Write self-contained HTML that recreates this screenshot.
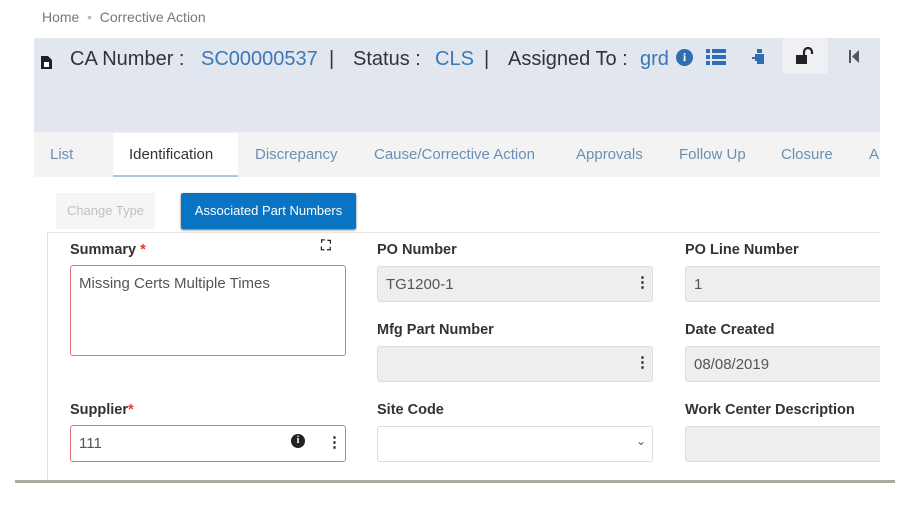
<!DOCTYPE html>
<html><head><style>
body{margin:0;width:915px;height:506px;background:#fff;font-family:"Liberation Sans",sans-serif;position:relative;overflow:hidden;color:#333}
.a{position:absolute}
.bc{left:42px;top:9px;font-size:14px;color:#777}
.hdr{left:34px;top:38px;width:846px;height:94px;background:#e2e6ee}
.ht{top:48px;font-size:20px;color:#333;white-space:nowrap}
.b{color:#3a78b8}
.tabs{left:34px;top:132px;width:846px;height:45px;background:#f3f3f3}
.tab{top:146px;font-size:15px;color:#6a8fb5}
.lbl{font-size:14.5px;font-weight:bold;color:#333}
.inp{border:1px solid #ddd;border-radius:3px;background:#eee;box-sizing:border-box;font-size:15px;color:#555;padding:9px 8px}
.red{border:1.5px solid #e57373;background:#fff}
.dots{font-weight:bold;font-size:15px;color:#222}
</style></head><body>
<div class="a bc">Home &nbsp;<span style="color:#bbb">•</span>&nbsp; Corrective Action</div>
<div class="a hdr"></div>
<svg class="a" style="left:40px;top:55px" width="13" height="15"><path d="M1 1h7l4 4v9H1z" fill="#222"/><rect x="4" y="7" width="5" height="5" fill="#fff"/></svg>
<div class="a ht" style="left:70px">CA Number :</div>
<div class="a ht b" style="left:201px">SC00000537</div>
<div class="a ht" style="left:329px">|</div>
<div class="a ht" style="left:353px">Status :</div>
<div class="a ht b" style="left:435px">CLS</div>
<div class="a ht" style="left:484px">|</div>
<div class="a ht" style="left:508px">Assigned To :</div>
<div class="a ht b" style="left:640px">grd</div>
<div class="a" style="left:676px;top:49px;width:17px;height:17px;border-radius:50%;background:#2f6db5;color:#fff;font-size:12px;font-weight:bold;text-align:center;line-height:17px;font-family:'Liberation Serif',serif">i</div>
<svg class="a" style="left:706px;top:48px" width="20" height="18" fill="#2f6db5"><rect x="0" y="1" width="4" height="4"/><rect x="6" y="1" width="14" height="4"/><rect x="0" y="7" width="4" height="4"/><rect x="6" y="7" width="14" height="4"/><rect x="0" y="13" width="4" height="4"/><rect x="6" y="13" width="14" height="4"/></svg>
<svg class="a" style="left:752px;top:49px" width="14" height="16" fill="#2f6db5"><rect x="5" y="0" width="5" height="4"/><path d="M3 5h9v10H5v-3H3z"/><rect x="0" y="8" width="3" height="2"/></svg>
<div class="a" style="left:782px;top:38px;width:46px;height:36px;background:#eef0f3;border-radius:3px"></div>
<svg class="a" style="left:795px;top:47px" width="20" height="18"><path d="M9 8V5a4 4 0 0 1 8 0v2" stroke="#222" stroke-width="2.2" fill="none"/><rect x="1" y="8" width="11" height="9" fill="#222"/></svg>
<svg class="a" style="left:848px;top:50px" width="12" height="14" fill="#555"><rect x="1" y="0" width="2" height="13"/><path d="M11 0L4 6.5 11 13z"/></svg>
<div class="a tabs"></div>
<div class="a" style="left:113px;top:133px;width:125px;height:44px;background:#fff;border-bottom:2px solid #a9c6e4;box-sizing:border-box"></div>
<div class="a tab" style="left:50px">List</div>
<div class="a tab" style="left:129px;color:#333">Identification</div>
<div class="a tab" style="left:255px">Discrepancy</div>
<div class="a tab" style="left:374px">Cause/Corrective Action</div>
<div class="a tab" style="left:576px">Approvals</div>
<div class="a tab" style="left:679px">Follow Up</div>
<div class="a tab" style="left:781px">Closure</div>
<div class="a tab" style="left:869px">A</div>
<div class="a" style="left:56px;top:193px;width:99px;height:36px;background:#f5f5f5;color:#c0c0c0;font-size:13px;text-align:center;line-height:36px">Change Type</div>
<div class="a" style="left:181px;top:193px;width:175px;height:36px;background:#0a74c4;color:#fff;font-size:13px;text-align:center;line-height:36px;border-radius:2px;box-shadow:0 1px 2px #666">Associated Part Numbers</div>
<div class="a" style="left:47px;top:232px;width:833px;height:1px;background:#ece9df"></div>
<div class="a" style="left:47px;top:232px;width:1px;height:248px;background:#e2e2e2"></div>
<div class="a" style="left:15px;top:480px;width:880px;height:3px;background:#a8ab9f"></div>
<div class="a lbl" style="left:70px;top:242px">Summary <span style="color:#e53935">*</span></div>
<div class="a" style="left:321px;top:237px;font-size:14px;font-weight:bold;color:#222">⛶</div>
<div class="a inp red" style="left:70px;top:265px;width:276px;height:91px">Missing Certs Multiple Times</div>
<div class="a lbl" style="left:377px;top:242px">PO Number</div>
<div class="a inp" style="left:377px;top:266px;width:276px;height:36px">TG1200-1</div><div class="a dots" style="left:635px;top:273px">⋮</div>
<div class="a lbl" style="left:685px;top:242px">PO Line Number</div>
<div class="a inp" style="left:685px;top:266px;width:200px;height:36px">1</div>
<div class="a lbl" style="left:377px;top:322px">Mfg Part Number</div>
<div class="a inp" style="left:377px;top:346px;width:276px;height:36px"></div><div class="a dots" style="left:635px;top:353px">⋮</div>
<div class="a lbl" style="left:685px;top:322px">Date Created</div>
<div class="a inp" style="left:685px;top:346px;width:200px;height:36px">08/08/2019</div>
<div class="a lbl" style="left:70px;top:402px">Supplier<span style="color:#e53935">*</span></div>
<div class="a inp red" style="left:70px;top:425px;width:276px;height:37px">111</div>
<div class="a" style="left:291px;top:434px;width:14px;height:14px;border-radius:50%;background:#222;color:#fff;font-size:10px;font-weight:bold;text-align:center;line-height:14px;font-family:'Liberation Serif',serif">i</div>
<div class="a dots" style="left:327px;top:433px">⋮</div>
<div class="a lbl" style="left:377px;top:402px">Site Code</div>
<div class="a inp" style="left:377px;top:426px;width:276px;height:36px;background:#fff"></div>
<div class="a" style="left:636px;top:434px;font-size:12px;color:#555">⌄</div>
<div class="a lbl" style="left:685px;top:402px">Work Center Description</div>
<div class="a inp" style="left:685px;top:426px;width:200px;height:36px"></div>
<div class="a" style="left:880px;top:30px;width:35px;height:450px;background:#fff"></div>
</body></html>
